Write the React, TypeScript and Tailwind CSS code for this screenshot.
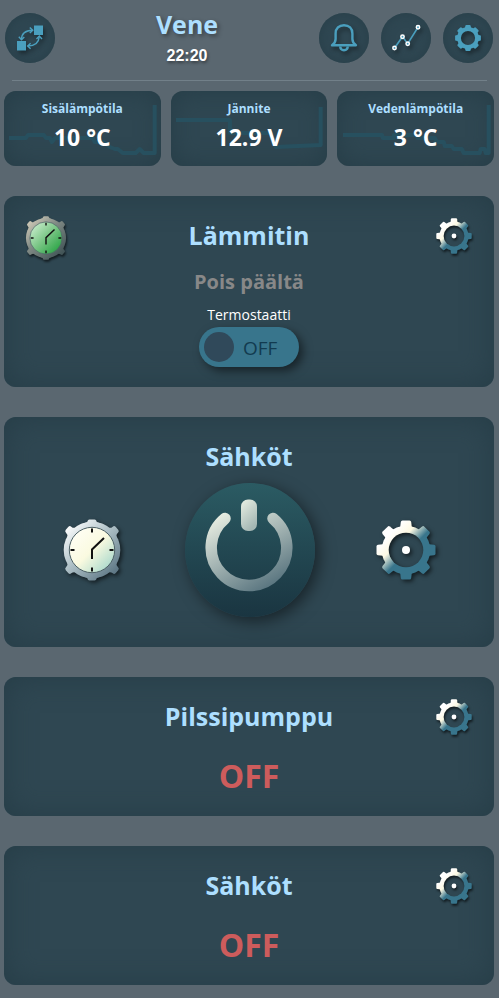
import type { ReactNode } from "react";

const FONT = "font-['Open_Sans','Noto_Sans',sans-serif]";

const TOOTH_ANGLES = [0, 45, 90, 135, 180, 225, 270, 315];
const KNOB_ANGLES = [49, 131, 229, 311];

function GearIcon({ id, className }: { id: string; className: string }) {
  return (
    <svg viewBox="0 0 60 60" className={className} aria-hidden="true">
      <defs>
        <linearGradient id={id} gradientUnits="userSpaceOnUse" x1="9" y1="9" x2="51" y2="51">
          <stop offset="0.12" stopColor="#ffffff" />
          <stop offset="0.32" stopColor="#fdf9e3" />
          <stop offset="0.54" stopColor="#38758c" />
          <stop offset="1" stopColor="#38758c" />
        </linearGradient>
        <mask id={id + "-shape"}>
          <circle cx="30" cy="30" r="24.3" fill="#fff" />
          {TOOTH_ANGLES.map((a) => (
            <path key={a} d="M24 9 L24.8 2 Q25 .5 26.5 .5 H33.5 Q35 .5 35.2 2 L36 9Z" fill="#fff" transform={`rotate(${a} 30 30)`} />
          ))}
          <circle cx="30" cy="30" r="17.3" fill="#000" />
        </mask>
      </defs>
      <rect width="60" height="60" fill={`url(#${id})`} mask={`url(#${id}-shape)`} />
      <circle cx="30" cy="30" r="4" fill="#fff" />
    </svg>
  );
}

function ClockIcon({ id, className, green = false }: { id: string; className: string; green?: boolean }) {
  return (
    <svg viewBox="0 0 62 62" className={className} aria-hidden="true">
      <defs>
        <linearGradient id={id + "-rim"} gradientUnits="userSpaceOnUse" x1="6" y1="6" x2="54" y2="56">
          <stop offset="0" stopColor={green ? "#d2ccb9" : "#ffffff"} />
          <stop offset="0.42" stopColor={green ? "#828b86" : "#b5c6cc"} />
          <stop offset="1" stopColor={green ? "#3e5154" : "#5a7482"} />
        </linearGradient>
        <linearGradient id={id + "-face"} x1="0.1" y1="0.1" x2="0.9" y2="0.9">
          <stop offset="0" stopColor={green ? "#c6ebca" : "#fffef5"} />
          <stop offset="0.5" stopColor={green ? "#78c584" : "#fafae0"} />
          <stop offset="1" stopColor={green ? "#29a344" : "#a9d8cc"} />
        </linearGradient>
        <mask id={id + "-shape"}>
          <g fill="#fff">
            <circle cx="31" cy="31" r="28.3" />
            <path d="M21 5L26 3.200L27 1.200Q27.500.5 28.500.5H33.500Q34.500.5 35 1.200L36 3.200L41 5ZM21 57L26 58.800L27 60.800Q27.500 61.500 28.500 61.500H33.500Q34.500 61.500 35 60.800L36 58.800L41 57Z" />
            {KNOB_ANGLES.map((a) => (
              <path key={a} d="M24 4.500Q27 3 27 0Q27-2 29-2H33Q35-2 35 0Q35 3 38 4.500Z" transform={`rotate(${a} 31 31)`} />
            ))}
          </g>
        </mask>
      </defs>
      <rect width="62" height="62" fill={`url(#${id}-rim)`} mask={`url(#${id}-shape)`} />
      <circle cx="31" cy="31" r="22.700" fill={`url(#${id}-face)`} stroke="#4d6166" strokeWidth="1" />
      <g stroke="#111" strokeWidth="2" fill="none">
        <path d="M31 9.500v4M31 48.500v4M9.500 31h4M48.500 31h4" />
        <path d="M31 40v-9.500l12-11.500" />
      </g>
    </svg>
  );
}

function RoundButton({ label, children }: { label: string; children: ReactNode }) {
  return (
    <button
      type="button"
      aria-label={label}
      className="size-[50px] shrink-0 rounded-full bg-[#2f4752] shadow-[inset_0_0_12px_#283f49]"
    >
      <svg viewBox="0 0 50 50" className="size-full drop-shadow-[2px_3px_2px_rgba(0,0,0,0.4)]" fill="none" stroke="#4a9fbe" aria-hidden="true">
        {children}
      </svg>
    </button>
  );
}

function Header() {
  return (
    <header className="flex items-center gap-3 pt-2 pr-[6px] pl-[5px]">
      <RoundButton label="Vaihda venettä">
        <g fill="#4a9fbe" stroke="none">
          <rect x="29" y="12.500" width="9" height="9.500" />
          <rect x="12" y="28" width="9" height="9.500" />
        </g>
        <g strokeWidth="1.400">
          <path d="M16.500 26.500C16.500 21 20 17.500 27.500 17.300" />
          <path d="M13.800 23.800l2.700 3 2.800-2.800M24.800 14.600l2.900 2.700-2.900 2.700" />
          <path d="M22.800 33C29 33 33.800 30 34.300 23.500" />
          <path d="M31.500 26l2.800-2.900 2.700 2.900M25.600 30.300l-2.900 2.700 2.900 2.700" />
        </g>
      </RoundButton>
      <div className="flex flex-1 flex-col items-center">
        <h1 className="text-[25px] leading-8 font-bold text-[#addfff] [text-shadow:2px_2px_4px_rgba(0,0,0,0.4)]">Vene</h1>
        <time className="mt-1 font-['Liberation_Sans',Arial,sans-serif] text-base leading-6 font-bold text-white [text-shadow:1px_2px_3px_rgba(0,0,0,0.4)]">22:20</time>
      </div>
      <RoundButton label="Hälytykset">
        <path d="M13 32.200C15.500 30.500 16.600 29 16.600 26V20.500C16.600 15.500 20 12.200 25 12.200S33.400 15.500 33.400 20.500V26C33.400 29 34.500 30.500 37 32.200Z" strokeWidth="2.400" strokeLinejoin="round" />
        <path d="M21.200 33.500C21.500 38.400 28.500 38.400 28.800 33.500" strokeWidth="2.400" />
      </RoundButton>
      <RoundButton label="Kuvaajat">
        <path d="M13.500 35L21.500 23.700L26.700 30.700L37 14.300" strokeWidth="1.600" />
        <g fill="#4a9fbe" stroke="#fff" strokeWidth="1.500">
          <circle cx="13.500" cy="35" r="1.700" />
          <circle cx="21.500" cy="23.700" r="1.700" />
          <circle cx="26.700" cy="30.700" r="1.700" />
          <circle cx="37" cy="14.300" r="1.700" />
        </g>
      </RoundButton>
      <RoundButton label="Asetukset">
        <circle cx="25" cy="25" r="9" strokeWidth="3.800" />
        <g fill="#4a9fbe" stroke="none">
          {TOOTH_ANGLES.map((a) => (
            <path key={a} d="M21.800 16l.5-3q.2-.9 1-.9h3.400q.8 0 1 .9l.5 3Z" transform={`rotate(${a} 25 25)`} />
          ))}
        </g>
      </RoundButton>
    </header>
  );
}

function StatCard({ label, value, line }: { label: string; value: string; line: string }) {
  return (
    <article className="relative h-[75px] min-w-0 flex-1 rounded-xl bg-[#2f4752] pt-2 text-center shadow-[inset_0_0_24px_#263d47]">
      <svg viewBox="0 0 157 75" preserveAspectRatio="none" className="absolute inset-0 size-full" aria-hidden="true">
        <polyline points={line} fill="none" stroke="#27505f" strokeWidth="4" strokeLinejoin="round" />
      </svg>
      <h2 className="relative text-xs leading-5 font-bold text-[#addfff]">{label}</h2>
      <p className="relative text-[23px] leading-9 font-bold text-white">{value}</p>
    </article>
  );
}

function Panel({ children }: { children: ReactNode }) {
  return (
    <section className="relative flex flex-col items-center rounded-xl bg-[#2f4752] px-5 pt-5 pb-4 shadow-[inset_0_0_30px_#263d47]">
      {children}
    </section>
  );
}

function PanelTitle({ children }: { children: ReactNode }) {
  return <h2 className="pb-[2px] text-[25px] leading-[38px] font-bold text-[#addfff]">{children}</h2>;
}

function CornerSettings({ id, label }: { id: string; label: string }) {
  return (
    <button type="button" aria-label={label} className="absolute top-5 right-5 size-10">
      <GearIcon id={id} className="mx-auto size-9 drop-shadow-[1px_2px_1px_rgba(0,0,0,0.6)]" />
    </button>
  );
}

function PumpPanel({ id, title }: { id: string; title: string }) {
  return (
    <Panel>
      <CornerSettings id={id} label={title + " asetukset"} />
      <PanelTitle>{title}</PanelTitle>
      <p className="mt-4 text-[32px] leading-[46px] font-bold text-[#cd5c5c] pb-px">OFF</p>
    </Panel>
  );
}

export default function App() {
  return (
    <div className={`${FONT} min-h-screen bg-[#5a6770] pb-3`}>
      <Header />
      <hr className="mx-3 mt-3 border-[#728089]" />
      <main className="flex flex-col gap-[30px] pt-[10px] pr-[5px] pl-1">
        <div className="flex gap-[10px]">
          <StatCard
            label="Sisälämpötila"
            value="10 °C"
            line="5,47 22,47 24,44 40,44 42,47 46,47 48,51 51,47 89,47 91,51 100,51 106,56 111,58 114,58 119,62 132,62 136,58 140,62 151,62 151,14"
          />
          <StatCard label="Jännite" value="12.9 V" line="5,29 59,29 59,42 100,42 105,56 150,54 150,16" />
          <StatCard
            label="Vedenlämpötila"
            value="3 °C"
            line="6,44 45,44 46,47 57,47 57,44 80,44 81,47 98,47 100,51 107,51 108,55 115,55 117,58 125,58 127,62 143,62 144,58 148,58 149,62 152,62 152,14"
          />
        </div>

        <Panel>
          <button type="button" aria-label="Lämmitin ajastin" className="absolute top-5 left-5">
            <ClockIcon id="heater-clock" green className="size-11 drop-shadow-[1px_2px_1px_rgba(0,0,0,0.6)]" />
          </button>
          <CornerSettings id="heater-gear" label="Lämmitin asetukset" />
          <PanelTitle>Lämmitin</PanelTitle>
          <p className="mt-2 text-[20px] leading-9 font-bold text-[#888888]">Pois päältä</p>
          <label htmlFor="thermostat" className="mt-[3px] text-sm leading-6 text-white">
            Termostaatti
          </label>
          <div className="relative mb-1 h-10">
            <input
              id="thermostat"
              type="checkbox"
              role="switch"
              className="block h-10 w-[100px] appearance-none rounded-full bg-[#38758c] p-[5px] shadow-[4px_4px_10px_rgba(0,0,0,0.5)] before:block before:size-[30px] before:rounded-full before:bg-[#30495a]"
            />
            <span className="pointer-events-none absolute top-0 left-11 text-[19px] leading-[43px] text-[#123b50]">OFF</span>
          </div>
        </Panel>

        <Panel>
          <PanelTitle>Sähköt</PanelTitle>
          <div className="mt-[6px] mb-[14px] flex w-full items-center justify-between pr-[38px] pl-[37px]">
            <button type="button" aria-label="Sähköt ajastin">
              <ClockIcon id="power-clock" className="size-[62px] drop-shadow-[2px_2px_2px_rgba(0,0,0,0.6)]" />
            </button>
            <button
              type="button"
              aria-label="Sähköt päälle"
              className="h-[134px] w-[130px] rounded-[50%] bg-linear-to-b from-[#2b5b63] to-[#1a3541] shadow-[4px_4px_16px_rgba(0,0,0,0.5)]"
            >
              <svg viewBox="0 0 130 134" className="size-full" aria-hidden="true">
                <defs>
                  <linearGradient id="power-arc" gradientUnits="userSpaceOnUse" x1="30" y1="34" x2="74" y2="108">
                    <stop offset="0" stopColor="#e8eee2" />
                    <stop offset="1" stopColor="#5d7882" />
                  </linearGradient>
                  <linearGradient id="power-bar" x1="0" y1="0" x2="0.500" y2="1">
                    <stop offset="0" stopColor="#eaf0e4" />
                    <stop offset="1" stopColor="#a5b7b4" />
                  </linearGradient>
                </defs>
                <path d="M40 35.500A37.800 37.800 0 1 0 88 35.500" fill="none" stroke="url(#power-arc)" strokeWidth="11.500" strokeLinecap="round" />
                <rect x="56" y="16.500" width="16" height="31.500" rx="7" fill="url(#power-bar)" />
              </svg>
            </button>
            <button type="button" aria-label="Sähköt asetukset">
              <GearIcon id="power-gear" className="size-[60px] drop-shadow-[2px_2px_2px_rgba(0,0,0,0.6)]" />
            </button>
          </div>
        </Panel>

        <PumpPanel id="bilge-gear" title="Pilssipumppu" />
        <PumpPanel id="electric-gear" title="Sähköt" />
      </main>
    </div>
  );
}
